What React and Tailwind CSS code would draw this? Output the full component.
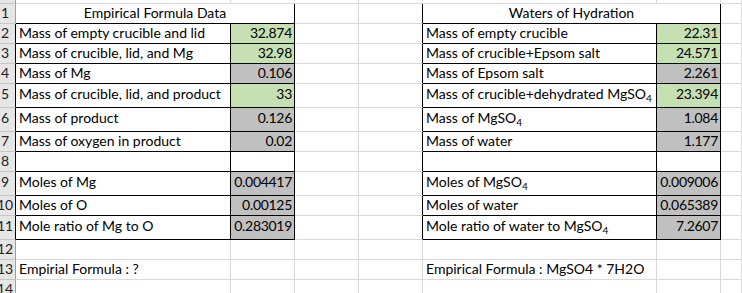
const GREEN = new Set([2, 3, 5]);
const GRAY = new Set([4, 6, 7, 9, 10, 11]);
const TALL = new Set([5, 6, 9, 11]);

const MgSO4 = (
  <>
    MgSO<span className="relative top-[3px] text-[10px] leading-none">4</span>
  </>
);

const left = {
  2: ["Mass of empty crucible and lid", "32.874"],
  3: ["Mass of crucible, lid, and Mg", "32.98"],
  4: ["Mass of Mg", "0.106"],
  5: ["Mass of crucible, lid, and product", "33"],
  6: ["Mass of product", "0.126"],
  7: ["Mass of oxygen in product", "0.02"],
  8: ["", ""],
  9: ["Moles of Mg", "0.004417"],
  10: ["Moles of O", "0.00125"],
  11: ["Mole ratio of Mg to O", "0.283019"],
  13: ["Empirial Formula : ?", ""],
};

const right = {
  2: ["Mass of empty crucible", "22.31"],
  3: ["Mass of crucible+Epsom salt", "24.571"],
  4: ["Mass of Epsom salt", "2.261"],
  5: [<>Mass of crucible+dehydrated {MgSO4}</>, "23.394"],
  6: [<>Mass of {MgSO4}</>, "1.084"],
  7: ["Mass of water", "1.177"],
  8: ["", ""],
  9: [<>Moles of {MgSO4}</>, "0.009006"],
  10: ["Moles of water", "0.065389"],
  11: [<>Mole ratio of water to {MgSO4}</>, "7.2607"],
  13: ["Empirical Formula : MgSO4 * 7H2O", ""],
};

// which cell edges get the black table border
function rightBlack(r, c) {
  if (r < 1 || r > 11) return false;
  if (c === 2 || c === 4 || c === 6) return true;
  if ((c === 0 || c === 1 || c === 5) && r >= 2) return true;
  return false;
}

function bottomBlack(r, c) {
  return r >= 1 && r <= 11 && (c === 1 || c === 2 || c === 5 || c === 6);
}

function fill(r, c) {
  if (c !== 2 && c !== 6) return "";
  if (GREEN.has(r)) return "bg-[#c6e0b4]";
  if (GRAY.has(r)) return "bg-[#c0c0c0]";
  return "";
}

function Cell({ r, c, span, align = "left", children }) {
  const rc = rightBlack(r, c) ? "border-r-black" : "border-r-[#d9d9d9]";
  const bc = bottomBlack(r, c) ? "border-b-black" : "border-b-[#d9d9d9]";
  const just =
    align === "right"
      ? "justify-end pr-[2px] tracking-[-0.3px]"
      : align === "center"
      ? "justify-center"
      : "justify-start pl-[3px]";
  return (
    <div
      className={`flex items-end overflow-hidden whitespace-nowrap border-r border-b pb-[2px] leading-[16px] ${rc} ${bc} ${just} ${fill(r, c)} ${
        span ? "col-span-2" : ""
      }`}
    >
      <span className={TALL.has(r) ? "pb-[3px]" : ""}>{children}</span>
    </div>
  );
}

function RowHeader({ r }) {
  const rc = r >= 2 && r <= 11 ? "border-r-black" : "border-r-[#9f9f9f]";
  return (
    <div className={`overflow-hidden border-r border-b border-b-[#c6c6c6] bg-[#e6e6e6] ${rc}`}>
      <div
        className={`-ml-[10px] flex h-full w-[30px] items-end justify-center leading-[16px] text-[#222] ${
          TALL.has(r) ? "pb-[5px]" : "pb-[2px]"
        }`}
      >
        {r > 0 ? r : ""}
      </div>
    </div>
  );
}

function Row({ r }) {
  if (r === 1) {
    return (
      <>
        <RowHeader r={1} />
        <Cell r={1} c={2} span align="center">
          Empirical Formula Data
        </Cell>
        <Cell r={1} c={3} />
        <Cell r={1} c={4} />
        <Cell r={1} c={6} span align="center">
          Waters of Hydration
        </Cell>
        <Cell r={1} c={7} />
      </>
    );
  }
  const l = left[r] || ["", ""];
  const rt = right[r] || ["", ""];
  return (
    <>
      <RowHeader r={r} />
      <Cell r={r} c={1}>{l[0]}</Cell>
      <Cell r={r} c={2} align="right">{l[1]}</Cell>
      <Cell r={r} c={3} />
      <Cell r={r} c={4} />
      <Cell r={r} c={5}>{rt[0]}</Cell>
      <Cell r={r} c={6} align="right">{rt[1]}</Cell>
      <Cell r={r} c={7} />
    </>
  );
}

export default function App() {
  const rows = Array.from({ length: 15 }, (_, i) => i);
  return (
    <div className="h-[293px] w-[742px] overflow-hidden bg-white font-['Lato',sans-serif] text-[14px] text-black">
      <div className="grid grid-cols-[16px_215px_64px_64px_64px_234px_64px_1fr] grid-rows-[4px_20px_20px_20px_20px_24px_24px_20px_20px_24px_20px_24px_20px_20px_20px]">
        {rows.map((r) => (
          <Row key={r} r={r} />
        ))}
      </div>
    </div>
  );
}
